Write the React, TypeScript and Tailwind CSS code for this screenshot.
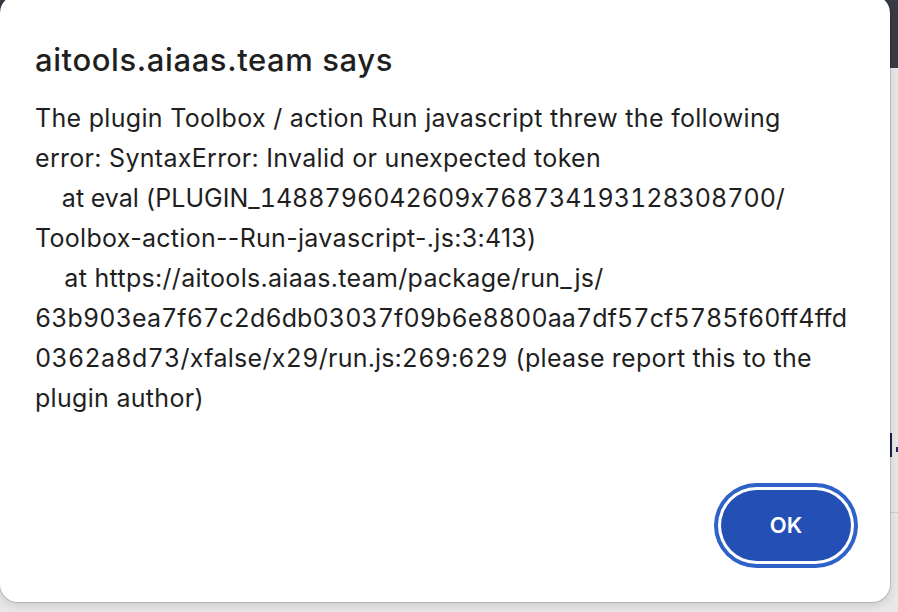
import React from "react";

const lines: { text: string; cls: string }[] = [
  { text: "The plugin Toolbox / action Run javascript threw the following", cls: "tracking-[0.3px]" },
  { text: "error: SyntaxError: Invalid or unexpected token", cls: "tracking-[0.3px]" },
  { text: "    at eval (PLUGIN_1488796042609x768734193128308700/", cls: "tabular-nums tracking-[0px]" },
  { text: "Toolbox-action--Run-javascript-.js:3:413)", cls: "tracking-[0.3px]" },
  { text: "    at https://aitools.aiaas.team/package/run_js/", cls: "tracking-[0.3px]" },
  { text: "63b903ea7f67c2d6db03037f09b6e8800aa7df57cf5785f60ff4ffd", cls: "tabular-nums tracking-[0.1px]" },
  { text: "0362a8d73/xfalse/x29/run.js:269:629 (please report this to the", cls: "tabular-nums tracking-[0.3px]" },
  { text: "plugin author)", cls: "tracking-[0.3px]" },
];

export default function App() {
  return (
    <div className="relative w-[898px] h-[612px] overflow-hidden bg-[#e8e8e8] flex flex-col font-['Inter','Noto_Sans',sans-serif] [font-feature-settings:'calt'_0]">
      {/* page behind */}
      <div className="h-[68px] bg-[#393b45] shrink-0" />
      <div className="flex-1 flex flex-col items-end pt-[365px]">
        <div className="flex items-start gap-[4px]">
          <div className="w-[2px] h-[24px] bg-[#1c2553]" />
          <div className="w-[2px] h-[5px] mt-[14px] bg-[#1c2553]" />
        </div>
        <div className="mt-[55px] w-[18px] h-px bg-[#cfcfcf]" />
      </div>

      {/* dialog */}
      <div className="absolute left-0 top-[-5px] w-[890px] h-[607px] rounded-[18px] bg-white shadow-[0_0_0_1px_rgba(0,0,0,0.13),0_3px_10px_rgba(0,0,0,0.14)] flex flex-col pl-[35px] pr-[39px] pt-[47px] pb-[41px]">
        <div className="text-[31px] leading-[36px] font-medium text-[#1f1f1f] tracking-[0.6px]">
          aitools.aiaas.team says
        </div>
        <div className="mt-[20px] text-[25px] leading-[40px] text-[#1f1f1f]">
          {lines.map((l, i) => (
            <div key={i} className={`whitespace-pre ${l.cls}`}>
              {l.text}
            </div>
          ))}
        </div>
        <div className="mt-auto flex justify-end">
          <button className="w-[130px] h-[71px] rounded-full bg-[#2450b6] text-white text-[22px] font-semibold ring-4 ring-[#2e62c9] ring-offset-[3px] ring-offset-white">
            OK
          </button>
        </div>
      </div>
    </div>
  );
}
